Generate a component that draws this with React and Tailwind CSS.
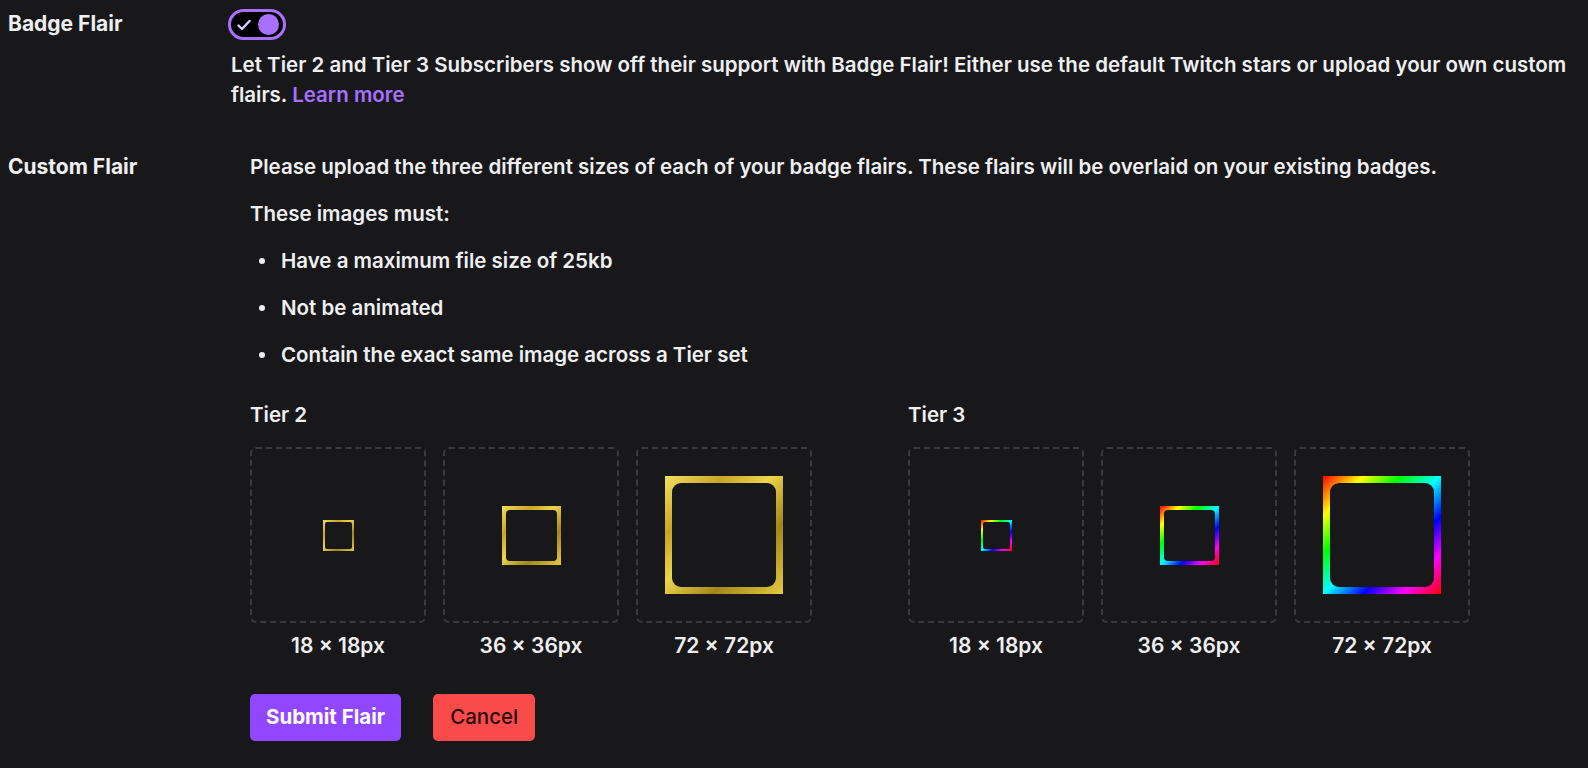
import React from 'react';

const sizes = [
  { label: '18 × 18px', px: 31, edge: 2, radius: 2 },
  { label: '36 × 36px', px: 59, edge: 4, radius: 4 },
  { label: '72 × 72px', px: 118, edge: 7, radius: 9 },
];

const gold = 'linear-gradient(135deg, #f0e060 0%, #c9a526 25%, #ecd44c 45%, #a4851a 70%, #e4c940 100%)';
const rainbow = 'linear-gradient(135deg, #ff0000 0%, #ffff00 17%, #00ff00 33%, #00ffff 50%, #0000ff 67%, #ff00ff 83%, #ff0000 100%)';

function Flair({ px, edge, radius, fill }) {
  // frame drawn as gradient square with a rounded hole on top
  return (
    <div style={{ width: px, height: px, padding: edge, background: fill }}>
      <div className="w-full h-full bg-[#18181b]" style={{ borderRadius: radius }} />
    </div>
  );
}

function TierSet({ title, fill }) {
  return (
    <div>
      <div className="leading-[30px] mb-[17px]">{title}</div>
      <div className="flex gap-[17px]">
        {sizes.map((s) => (
          <div key={s.label} className="flex flex-col items-center">
            <div className="w-[176px] h-[176px] border-2 border-dashed border-[#3a3a3d] rounded-[6px] flex items-center justify-center">
              <Flair px={s.px} edge={s.edge} radius={s.radius} fill={fill} />
            </div>
            <div className="leading-[30px] mt-[8px] text-[21px]">{s.label}</div>
          </div>
        ))}
      </div>
    </div>
  );
}

function Toggle() {
  return (
    <div className="w-[58px] h-[31px] rounded-full border-[3px] border-[#a970ff] bg-black flex items-center justify-between pl-[6px] pr-[4px]">
      <svg width="14" height="12" viewBox="0 0 14 12" fill="none">
        <path d="M1.5 6.5 L5 10 L12.5 2" stroke="#dccbff" strokeWidth="2.4" strokeLinecap="round" strokeLinejoin="round" />
      </svg>
      <div className="w-[21px] h-[21px] rounded-full bg-[#a970ff]" />
    </div>
  );
}

export default function App() {
  return (
    <div className="min-h-screen bg-[#18181b] text-[#efeff1] font-['Inter',sans-serif] text-[20.5px] font-semibold pt-[9px]">
      <div className="flex">
        <div className="w-[228px] pl-[8px] font-bold text-[21px] leading-[30px]">Badge Flair</div>
        <div className="flex-1 pr-[16px]">
          <Toggle />
          <p className="mt-[10px] leading-[30px] pl-[3px]">
            Let Tier 2 and Tier 3 Subscribers show off their support with Badge Flair! Either use the default Twitch stars or upload your own custom flairs.{' '}
            <span className="text-[#a970ff]">Learn more</span>
          </p>
        </div>
      </div>

      <div className="flex mt-[42px]">
        <div className="w-[250px] pl-[8px] font-bold text-[21px] leading-[30px]">Custom Flair</div>
        <div className="flex-1">
          <p className="leading-[30px]">
            Please upload the three different sizes of each of your badge flairs. These flairs will be overlaid on your existing badges.
          </p>
          <p className="leading-[30px] mt-[17px]">These images must:</p>
          <ul className="mt-[17px] flex flex-col gap-[17px]">
            {['Have a maximum file size of 25kb', 'Not be animated', 'Contain the exact same image across a Tier set'].map((t) => (
              <li key={t} className="flex items-center leading-[30px]">
                <span className="w-[6px] h-[6px] rounded-full bg-[#efeff1] ml-[9px] mr-[16px]" />
                {t}
              </li>
            ))}
          </ul>

          <div className="flex gap-[96px] mt-[30px]">
            <TierSet title="Tier 2" fill={gold} />
            <TierSet title="Tier 3" fill={rainbow} />
          </div>

          <div className="flex gap-[32px] mt-[33px]">
            <button className="h-[47px] px-[16px] rounded-[5px] bg-[#9147ff] text-white font-bold">Submit Flair</button>
            <button className="h-[47px] px-[17px] rounded-[5px] bg-[#fa4b4b] text-[#2a0a0a] font-medium">Cancel</button>
          </div>
        </div>
      </div>
    </div>
  );
}
